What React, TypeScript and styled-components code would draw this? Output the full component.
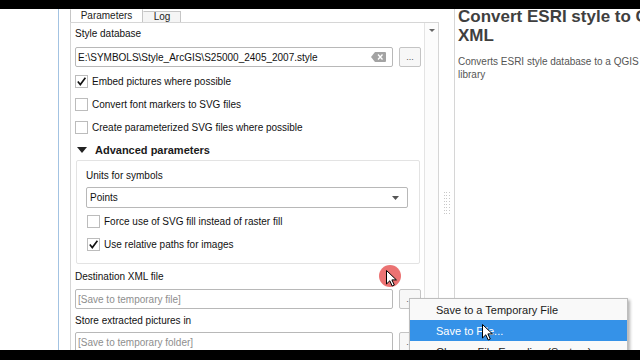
import React from "react"
import styled, { createGlobalStyle } from "styled-components"

const GlobalStyle = createGlobalStyle`
  html, body { margin:0; padding:0; background:#fff; }
  body {
    width:640px; height:360px; overflow:hidden;
    font-family:"Liberation Sans", Arial, sans-serif;
    color:#111;
  }
`

const Screen = styled.div`
  position:relative;
  width:640px;
  height:360px;
  display:flex;
  flex-direction:column;
  overflow:hidden;
  background:#fff;
`

const Letterbox = styled.div<{ $h: number }>`
  position:relative;
  z-index:5;
  flex:none;
  height:${(p) => p.$h}px;
  background:#000;
`

const Main = styled.div`
  flex:1;
  min-height:0;
  display:flex;
`

const Gutter = styled.div`
  flex:none;
  width:58px;
  margin-right:11px;
  border-right:1px solid #a3c3e2;
`

const Dialog = styled.div`
  flex:none;
  width:369px;
  display:flex;
  flex-direction:column;
`

const TabBar = styled.div`
  flex:none;
  height:13px;
  display:flex;
  align-items:flex-end;
`

const Tab = styled.div<{ $active?: boolean; $w: number }>`
  box-sizing:border-box;
  width:${(p) => p.$w}px;
  height:${(p) => (p.$active ? 13 : 11)}px;
  border:1px solid #c6c6c6;
  border-top-color:${(p) => (p.$active ? "transparent" : "#c6c6c6")};
  border-bottom:none;
  border-left-color:${(p) => (p.$active ? "#c6c6c6" : "transparent")};
  background:${(p) => (p.$active ? "#fff" : "#f5f5f5")};
  font-size:10px;
  line-height:${(p) => (p.$active ? 11 : 10)}px;
  text-align:center;
  color:#222;
`

const Pane = styled.div`
  flex:1;
  min-height:0;
  display:flex;
  border:1px solid #d6d6d6;
  border-bottom:none;
`

const Form = styled.div`
  flex:1;
  min-width:0;
  display:flex;
  flex-direction:column;
  padding:4px 3px 0 4px;
  overflow:hidden;
`

const ScrollBar = styled.div`
  flex:none;
  width:13px;
  border-left:1px solid #e4e4e4;
  background:#fcfcfc;
  display:flex;
  justify-content:center;
  padding-top:6px;
`

const FieldLabel = styled.div<{ $mt?: number }>`
  flex:none;
  margin-top:${(p) => p.$mt ?? 0}px;
  font-size:10px;
  line-height:14px;
  white-space:nowrap;
`

const InputRow = styled.div<{ $mt: number }>`
  flex:none;
  display:flex;
  gap:6px;
  height:20px;
  margin-top:${(p) => p.$mt}px;
`

const TextField = styled.div<{ $placeholder?: boolean }>`
  flex:1;
  box-sizing:border-box;
  display:flex;
  align-items:center;
  justify-content:space-between;
  padding:0 6px 0 2px;
  border:1px solid #b8b8b8;
  border-radius:2px;
  font-size:10px;
  white-space:nowrap;
  color:${(p) => (p.$placeholder ? "#8e8e8e" : "#111")};
`

const BrowseButton = styled.div`
  flex:none;
  box-sizing:border-box;
  width:22px;
  border:1px solid #c4c4c4;
  border-radius:2px;
  background:#f7f7f7;
  display:flex;
  align-items:flex-end;
  justify-content:center;
  padding-bottom:4px;
  font-size:9px;
  line-height:9px;
  color:#555;
`

const CheckRow = styled.div<{ $mt?: number; $indent?: number }>`
  flex:none;
  display:flex;
  align-items:center;
  gap:4px;
  height:23px;
  margin-top:${(p) => p.$mt ?? 0}px;
  padding-left:${(p) => p.$indent ?? 0}px;
  font-size:10px;
  white-space:nowrap;
`

const Box = styled.span`
  flex:none;
  box-sizing:border-box;
  width:13px;
  height:13px;
  border:1px solid #bcbcbc;
  background:#fff;
  display:flex;
  align-items:center;
  justify-content:center;
`

const SectionHeader = styled.div`
  flex:none;
  display:flex;
  align-items:center;
  gap:8px;
  height:20px;
  margin-top:1px;
  padding-left:2px;
  font-size:11px;
  font-weight:bold;
  color:#1a1a1a;
`

const Group = styled.div`
  flex:none;
  display:flex;
  flex-direction:column;
  margin:0 1px;
  padding:8px 11px 7px 9px;
  border:1px solid #e3e3e3;
  border-radius:2px;
`

const Combo = styled.div`
  flex:none;
  box-sizing:border-box;
  height:21px;
  margin-top:4px;
  display:flex;
  align-items:center;
  justify-content:space-between;
  padding:0 8px 0 3px;
  border:1px solid #b8b8b8;
  border-radius:2px;
  font-size:10px;
`

const Splitter = styled.div`
  flex:none;
  width:15px;
  display:flex;
  justify-content:center;
  padding-top:183px;
`

const Grip = styled.div`
  width:6px;
  height:23px;
  background:
    repeating-linear-gradient(to bottom, #c8c8c8 0 1px, transparent 1px 3px) left / 1px 100% no-repeat,
    repeating-linear-gradient(to bottom, #c8c8c8 0 1px, transparent 1px 3px) center / 1px 100% no-repeat,
    repeating-linear-gradient(to bottom, #c8c8c8 0 1px, transparent 1px 3px) right / 1px 100% no-repeat;
`

const Info = styled.div`
  flex:none;
  width:232px;
  border-left:1px solid #d6d6d6;
  padding-left:3px;
`

const InfoTitle = styled.h1`
  margin:-2px 0 0;
  font-size:17px;
  line-height:19px;
  font-weight:bold;
  color:#3f3f3f;
`

const InfoText = styled.p`
  margin:10px 0 0;
  font-size:10px;
  line-height:13px;
  color:#555;
`

const ClickMark = styled.div`
  position:absolute;
  left:379px;
  top:265px;
  width:22px;
  height:22px;
  border-radius:50%;
  background:rgba(232, 96, 96, 0.88);
  z-index:2;
`

const Menu = styled.div`
  position:absolute;
  left:409px;
  top:298px;
  width:219px;
  box-sizing:border-box;
  border:1px solid #bdbdbd;
  background:#f9f9f9;
  box-shadow:2px 2px 3px rgba(0, 0, 0, 0.3);
  z-index:3;
`

const MenuItem = styled.div<{ $active?: boolean }>`
  height:21px;
  display:flex;
  align-items:center;
  padding-left:26px;
  font-size:11px;
  white-space:nowrap;
  background:${(p) => (p.$active ? "#3592e8" : "transparent")};
  color:${(p) => (p.$active ? "#fff" : "#1a1a1a")};
`

const Pointer = styled.svg<{ $x: number; $y: number }>`
  position:absolute;
  left:${(p) => p.$x}px;
  top:${(p) => p.$y}px;
  z-index:4;
`

const Check = ({ on }: { on?: boolean }) => (
  <Box>
    {on && (
      <svg width="11" height="11" viewBox="0 0 11 11">
        <path d="M1.8 5.6 L4.3 8.6 L9.4 1.8" fill="none" stroke="#111" strokeWidth="1.6" />
      </svg>
    )}
  </Box>
)

const ClearIcon = () => (
  <svg width="15" height="10" viewBox="0 0 15 10">
    <path d="M4 0 H14 a1 1 0 0 1 1 1 V9 a1 1 0 0 1 -1 1 H4 L0 5 Z" fill="#a3a3a3" />
    <path d="M7 2.5 L11.5 7.5 M11.5 2.5 L7 7.5" stroke="#fff" strokeWidth="1.3" />
  </svg>
)

const Arrow = ({ w, h, color }: { w: number; h: number; color: string }) => (
  <svg width={w} height={h} viewBox={`0 0 ${w} ${h}`}>
    <path d={`M0 0 H${w} L${w / 2} ${h} Z`} fill={color} />
  </svg>
)

const CursorPath = () => (
  <path
    d="M0.5 0.5 L0.5 14 L3.8 10.8 L6.2 16 L8.3 15 L5.9 9.9 L10.4 9.9 Z"
    fill="#fff"
    stroke="#000"
    strokeWidth="1"
  />
)

const App = () => {
  return (
    <Screen>
      <GlobalStyle />
      <Letterbox $h={9} />
      <Main>
        <Gutter />
        <Dialog>
          <TabBar>
            <Tab $active $w={73}>Parameters</Tab>
            <Tab $w={38}>Log</Tab>
          </TabBar>
          <Pane>
            <Form>
              <FieldLabel>Style database</FieldLabel>
              <InputRow $mt={6}>
                <TextField>
                  E:\SYMBOLS\Style_ArcGIS\S25000_2405_2007.style
                  <ClearIcon />
                </TextField>
                <BrowseButton>...</BrowseButton>
              </InputRow>
              <CheckRow $mt={3}>
                <Check on />
                Embed pictures where possible
              </CheckRow>
              <CheckRow>
                <Check />
                Convert font markers to SVG files
              </CheckRow>
              <CheckRow>
                <Check />
                Create parameterized SVG files where possible
              </CheckRow>
              <SectionHeader>
                <Arrow w={10} h={6} color="#222" />
                Advanced parameters
              </SectionHeader>
              <Group>
                <FieldLabel>Units for symbols</FieldLabel>
                <Combo>
                  Points
                  <Arrow w={7} h={4} color="#555" />
                </Combo>
                <CheckRow $mt={2} $indent={1}>
                  <Check />
                  Force use of SVG fill instead of raster fill
                </CheckRow>
                <CheckRow $indent={1}>
                  <Check on />
                  Use relative paths for images
                </CheckRow>
              </Group>
              <FieldLabel $mt={6}>Destination XML file</FieldLabel>
              <InputRow $mt={5}>
                <TextField $placeholder>[Save to temporary file]</TextField>
                <BrowseButton>...</BrowseButton>
              </InputRow>
              <FieldLabel $mt={5}>Store extracted pictures in</FieldLabel>
              <InputRow $mt={4}>
                <TextField $placeholder>[Save to temporary folder]</TextField>
                <BrowseButton>...</BrowseButton>
              </InputRow>
            </Form>
            <ScrollBar>
              <Arrow w={6} h={3} color="#666" />
            </ScrollBar>
          </Pane>
        </Dialog>
        <Splitter>
          <Grip />
        </Splitter>
        <Info>
          <InfoTitle>Convert ESRI style to QGIS XML</InfoTitle>
          <InfoText>Converts ESRI style database to a QGIS symbol library</InfoText>
        </Info>
      </Main>
      <Letterbox $h={10} />

      <ClickMark />
      <Pointer $x={386} $y={270} width="11" height="17" viewBox="0 0 11 17">
        <CursorPath />
      </Pointer>

      <Menu>
        <MenuItem>Save to a Temporary File</MenuItem>
        <MenuItem $active>Save to File...</MenuItem>
        <MenuItem>Change File Encoding (System)</MenuItem>
      </Menu>
      <Pointer $x={482} $y={324} width="11" height="17" viewBox="0 0 11 17">
        <CursorPath />
      </Pointer>
    </Screen>
  )
}

export default App
